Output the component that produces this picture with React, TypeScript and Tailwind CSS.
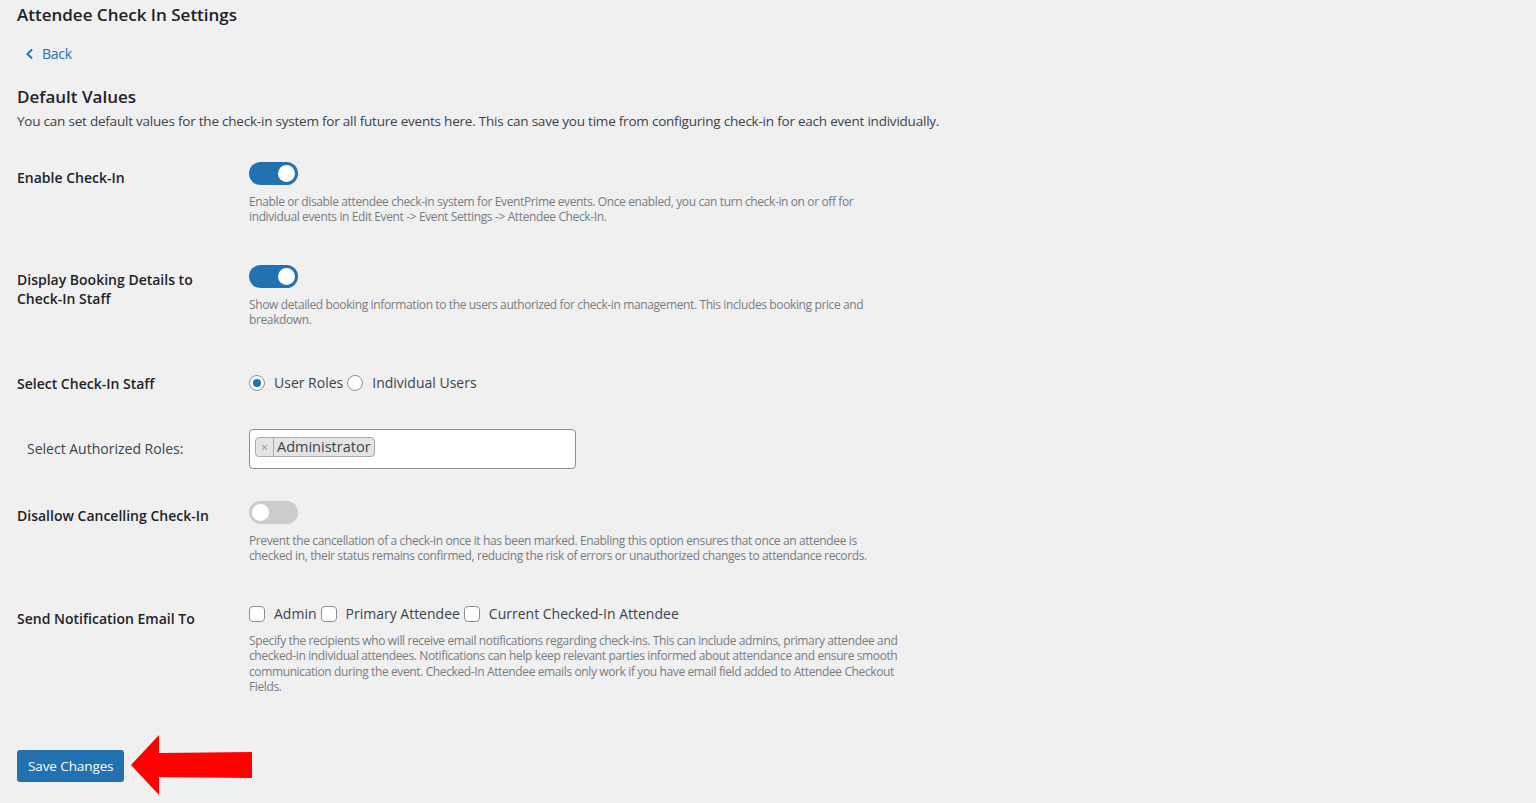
import React from "react";

const font = { fontFamily: '"Open Sans", "Noto Sans", sans-serif' };

function Toggle({ on }: { on: boolean }) {
  return (
    <div
      className={`w-[49px] h-[23px] rounded-full flex items-center px-[3px] ${
        on ? "bg-[#2271b1] justify-end" : "bg-[#cccccc] justify-start"
      }`}
    >
      <div className="w-[17px] h-[17px] rounded-full bg-white" />
    </div>
  );
}

function Row({
  label,
  children,
  className = "",
}: {
  label: React.ReactNode;
  children: React.ReactNode;
  className?: string;
}) {
  return (
    <div className={`flex ${className}`}>
      <div className="w-[232px] shrink-0 text-[14px] font-semibold text-[#1d2327] leading-[19px]">
        {label}
      </div>
      <div className="flex-1">{children}</div>
    </div>
  );
}

function Desc({ children }: { children: React.ReactNode }) {
  return (
    <p className="text-[12px] leading-[15px] text-[#787c82] tracking-[-0.38px] w-[652px] mt-[9px]">
      {children}
    </p>
  );
}

function Checkbox({ label }: { label: string }) {
  return (
    <span className="flex items-center">
      <span className="w-[16px] h-[16px] rounded-[4px] border border-[#8c8f94] bg-white inline-block" />
      <span className="ml-[9px] mr-[4px]">{label}</span>
    </span>
  );
}

export default function App() {
  return (
    <div className="min-h-[803px] bg-[#f0f0f1] text-[#1d2327]" style={font}>
      <div className="px-[17px] pt-[3px]">
        <h1 className="text-[17px] font-semibold leading-[24px]">Attendee Check In Settings</h1>
        <a className="flex items-center mt-[17px] ml-[7px] text-[#2271b1] text-[14px] leading-[20px] tracking-[-0.3px]">
          <svg width="12" height="12" viewBox="0 0 12 12" className="mr-[6px]">
            <path d="M8 1.5 L3.5 6 L8 10.5" fill="none" stroke="#2271b1" strokeWidth="2" />
          </svg>
          Back
        </a>
        <h2 className="mt-[21px] text-[17px] font-semibold leading-[24px]">Default Values</h2>
        <p className="text-[13.5px] leading-[20px] text-[#3c434a] tracking-[-0.22px] mt-[2px]">
          You can set default values for the check-in system for all future events here. This can
          save you time from configuring check-in for each event individually.
        </p>

        <Row label={<div className="pt-[6px]">Enable Check-In</div>} className="mt-[31px]">
          <Toggle on />
          <Desc>
            Enable or disable attendee check-in system for EventPrime events. Once enabled, you can
            turn check-in on or off for individual events in Edit Event -&gt; Event Settings -&gt;
            Attendee Check-In.
          </Desc>
        </Row>

        <Row
          label={
            <div className="pt-[5px]">
              Display Booking Details to
              <br />
              Check-In Staff
            </div>
          }
          className="mt-[41px]"
        >
          <Toggle on />
          <Desc>
            Show detailed booking information to the users authorized for check-in management. This
            includes booking price and breakdown.
          </Desc>
        </Row>

        <Row label={<div className="pt-[1px]">Select Check-In Staff</div>} className="mt-[46px]">
          <div className="flex items-center text-[14px] text-[#3c434a] leading-[20px]">
            <span className="w-[16px] h-[16px] rounded-full border border-[#8c8f94] bg-white flex items-center justify-center">
              <span className="w-[8px] h-[8px] rounded-full bg-[#2271b1]" />
            </span>
            <span className="ml-[9px] mr-[4px]">User Roles</span>
            <span className="w-[16px] h-[16px] rounded-full border border-[#8c8f94] bg-white" />
            <span className="ml-[9px]">Individual Users</span>
          </div>
        </Row>

        <div className="flex mt-[36px]">
          <div className="w-[232px] shrink-0 pl-[10px] pt-[10px] text-[14px] text-[#3c434a] leading-[20px]">
            Select Authorized Roles:
          </div>
          <div className="w-[327px] h-[40px] bg-white border border-[#8c8f94] rounded-[4px] px-[5px] pt-[4px]">
            <span className="inline-flex items-stretch h-[20px] border border-[#aaa] rounded-[4px] bg-[#e4e4e4] text-[14.5px] leading-[18px] text-[#3c434a]">
              <span className="w-[18px] flex items-center justify-center text-[#999] text-[13px] border-r border-[#aaa]">
                ×
              </span>
              <span className="px-[3px]">Administrator</span>
            </span>
          </div>
        </div>

        <Row label={<div className="pt-[5px]">Disallow Cancelling Check-In</div>} className="mt-[32px]">
          <Toggle on={false} />
          <Desc>
            Prevent the cancellation of a check-in once it has been marked. Enabling this option
            ensures that once an attendee is checked in, their status remains confirmed, reducing
            the risk of errors or unauthorized changes to attendance records.
          </Desc>
        </Row>

        <Row label={<div className="pt-[5px]">Send Notification Email To</div>} className="mt-[41px]">
          <div className="flex items-center text-[14px] text-[#3c434a] leading-[20px]">
            <Checkbox label="Admin" />
            <Checkbox label="Primary Attendee" />
            <Checkbox label="Current Checked-In Attendee" />
          </div>
          <p className="text-[12px] leading-[15.3px] text-[#787c82] tracking-[-0.38px] w-[652px] mt-[9px]">
            Specify the recipients who will receive email notifications regarding check-ins. This can
            include admins, primary attendee and checked-in individual attendees. Notifications can
            help keep relevant parties informed about attendance and ensure smooth communication
            during the event. Checked-In Attendee emails only work if you have email field added to
            Attendee Checkout Fields.
          </p>
        </Row>

        <div className="flex items-center mt-[41px]">
          <button className="h-[32px] px-[11px] rounded-[3px] bg-[#2271b1] text-white text-[13.5px] tracking-[-0.1px] leading-[20px]">
            Save Changes
          </button>
          <svg width="126" height="62" viewBox="0 0 126 62" className="ml-[4px]">
            <polygon points="3,30 31,0 31,18 124,17 124,43 31,42 31,60" fill="#ff0000" />
          </svg>
        </div>
      </div>
    </div>
  );
}
